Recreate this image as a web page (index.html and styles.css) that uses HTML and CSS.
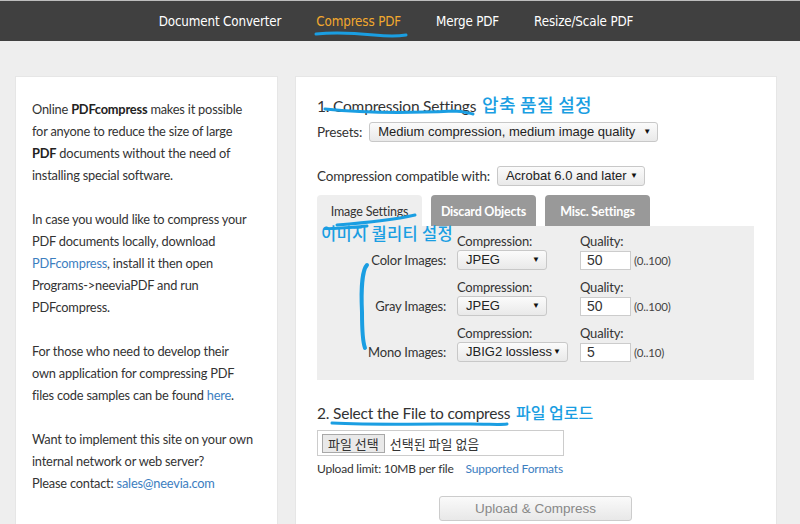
FILE: index.html
```html
<!DOCTYPE html>
<html lang="en">
<head>
    <meta charset="UTF-8">
    <title>PDFcompress - Compress PDF</title>
    <link rel="stylesheet" href="styles.css">
</head>
<body>
    <nav class="topnav">
        <a href="#">Document Converter</a>
        <a href="#" class="active">Compress PDF</a>
        <a href="#">Merge PDF</a>
        <a href="#">Resize/Scale PDF</a>
        <svg class="mark mark-nav" width="100" height="14" viewBox="0 0 100 14"><path d="M2 6 C20 4 40 5 60 7 C70 8 80 9 92 7" /></svg>
    </nav>
    <main class="wrap">
        <aside class="about">
            <p>Online <b>PDFcompress</b> makes it possible for anyone to reduce the size of large <b>PDF</b> documents without the need of installing special software.</p>
            <p>In case you would like to compress your PDF documents locally, download <a href="#">PDFcompress</a>, install it then open Programs-&gt;neeviaPDF and run PDFcompress.</p>
            <p>For those who need to develop their own application for compressing PDF files code samples can be found <a href="#">here</a>.</p>
            <p>Want to implement this site on your own internal network or web server?<br>Please contact: <a href="#">sales@neevia.com</a></p>
        </aside>
        <section class="tool">
            <h2 class="step">1. Compression Settings <span class="note note-big">압축 품질 설정</span></h2>
            <div class="row">
                <label>Presets:</label>
                <div class="select sel-preset">Medium compression, medium image quality</div>
            </div>
            <div class="row row-compat">
                <label>Compression compatible with:</label>
                <div class="select sel-compat">Acrobat 6.0 and later</div>
            </div>
            <div class="tabs">
                <div class="tab current">Image Settings</div>
                <div class="tab">Discard Objects</div>
                <div class="tab">Misc. Settings</div>
            </div>
            <div class="tab-panel">
                <span class="note note-panel">이미지 퀄리티 설정</span>
                <div class="img-row">
                    <label class="img-label">Color Images:</label>
                    <div class="field">
                        <span class="small">Compression:</span>
                        <div class="select sel-img">JPEG</div>
                    </div>
                    <div class="field">
                        <span class="small">Quality:</span>
                        <div class="quality"><span class="qbox">50</span><span class="range">(0..100)</span></div>
                    </div>
                </div>
                <div class="img-row">
                    <label class="img-label">Gray Images:</label>
                    <div class="field">
                        <span class="small">Compression:</span>
                        <div class="select sel-img">JPEG</div>
                    </div>
                    <div class="field">
                        <span class="small">Quality:</span>
                        <div class="quality"><span class="qbox">50</span><span class="range">(0..100)</span></div>
                    </div>
                </div>
                <div class="img-row">
                    <label class="img-label">Mono Images:</label>
                    <div class="field">
                        <span class="small">Compression:</span>
                        <div class="select sel-mono">JBIG2 lossless</div>
                    </div>
                    <div class="field">
                        <span class="small">Quality:</span>
                        <div class="quality"><span class="qbox">5</span><span class="range">(0..10)</span></div>
                    </div>
                </div>
            </div>
            <h2 class="step step-file">2. Select the File to compress <span class="note">파일 업로드</span></h2>
            <div class="file-box">
                <span class="file-btn">파일 선택</span>
                <span class="file-name">선택된 파일 없음</span>
            </div>
            <div class="limits">Upload limit: 10MB per file <a href="#">Supported Formats</a></div>
            <div class="submit-row"><span class="btn-upload">Upload &amp; Compress</span></div>

            <svg class="mark mark-h1" width="160" height="14" viewBox="0 0 160 14"><path d="M2 4 C40 8 90 8 130 6 C140 6 145 8 150 9" /></svg>
            <svg class="mark mark-tab" width="100" height="18" viewBox="0 0 100 18"><path d="M14 13 C40 11 70 8 92 3" /><path d="M2 17 C20 16 35 15 44 14" /></svg>
            <svg class="mark mark-brace" width="14" height="90" viewBox="0 0 14 90"><path d="M10 3 C5 8 4 30 5 50 C5 65 5 78 8 86" /></svg>
            <svg class="mark mark-file" width="190" height="10" viewBox="0 0 190 10"><path d="M2 4 C40 6 100 5 140 5 C160 5 170 6 177 5" /></svg>
        </section>
    </main>
</body>
</html>
```

FILE: styles.css
```css
* { margin: 0; padding: 0; box-sizing: border-box; }
body { background-color: #eeeeee; color: #333333; font-family: 'Lato', 'Noto Sans CJK KR', sans-serif; font-size: 14px; letter-spacing: -0.2px; height: 524px; overflow: hidden; }
a { color: #3c7ebf; text-decoration: none; }

.topnav { position: relative; height: 41px; background-color: #404040; border-top: 1px solid #bdbdbd; display: flex; justify-content: center; gap: 35px; padding-right: 8px; align-items: center; }
.topnav a { color: #ffffff; font-family: 'Liberation Sans Narrow', 'DejaVu Sans Condensed', sans-serif; font-size: 13.3px; font-weight: 400; letter-spacing: -0.15px; }
.topnav a.active { color: #f2a82e; }

.mark { position: absolute; fill: none; stroke: #1a9ee2; stroke-width: 3; stroke-linecap: round; }
.mark-nav { left: 314px; top: 27px; }

.wrap { display: flex; gap: 17px; margin: 35px 0 0 15px; align-items: flex-start; }
.about { width: 263px; height: 460px; background-color: #ffffff; padding: 21px 23px 21px 16px; border: 1px solid #e6e6e6; }
.about p { line-height: 22px; margin-bottom: 22px; font-size: 12.8px; }
.about b { color: #222222; font-weight: 700; }

.tool { position: relative; width: 482px; height: 460px; background-color: #ffffff; padding: 16px 22px 0 21px; border: 1px solid #e6e6e6; }
.step { font-size: 15.5px; font-weight: 400; color: #333333; line-height: 22px; }
.note { color: #1a9ee2; font-family: 'Noto Sans CJK KR', sans-serif; font-weight: 500; font-size: 16px; margin-left: 2px; letter-spacing: 0; }
.note-big { font-size: 18px; letter-spacing: 0.3px; }

.row { display: flex; align-items: center; gap: 7px; margin-top: 5px; }
.row label { font-size: 13.5px; }
.row-compat { margin-top: 24px; }
.select { position: relative; height: 20px; border: 1px solid #c8c8c8; border-radius: 3px; background: linear-gradient(#fbfbfb, #e9e9e9); font-family: 'Liberation Sans', Arial, sans-serif; font-size: 13px; letter-spacing: 0; color: #222222; line-height: 18px; padding-left: 8px; }
.select::after { content: '▼'; position: absolute; right: 6px; top: 0; font-size: 8px; color: #111111; }
.sel-preset { width: 289px; }
.sel-compat { width: 148px; }

.tabs { display: flex; gap: 9px; margin-top: 9px; }
.tab { width: 105px; height: 31px; border-radius: 4px 4px 0 0; background-color: #999999; color: #ffffff; font-size: 12.5px; font-weight: 700; text-align: center; line-height: 33px; }
.tab.current { background-color: #eeeeee; color: #333333; font-weight: 400; }

.tab-panel { position: relative; background-color: #eeeeee; height: 154px; padding: 7px 0 0 0; }
.note-panel { position: absolute; left: 4px; top: -5px; font-size: 16.5px; margin: 0; letter-spacing: 0.3px; }
.img-row { display: flex; align-items: flex-end; margin-bottom: 9px; }
.img-label { width: 129px; text-align: right; font-size: 13px; height: 20px; line-height: 20px; }
.field { display: flex; flex-direction: column; gap: 1px; margin-left: 11px; }
.field + .field { margin-left: 0; }
.img-row .field:nth-child(2) { width: 123px; }
.small { font-size: 13px; line-height: 16px; }
.sel-img { width: 90px; }
.sel-mono { width: 111px; }
.quality { display: flex; align-items: center; height: 20px; }
.qbox { width: 51px; height: 19px; background-color: #ffffff; border: 1px solid #cccccc; font-family: 'Liberation Sans', Arial, sans-serif; font-size: 14px; letter-spacing: 0; line-height: 17px; padding-left: 6px; }
.range { font-size: 11.5px; color: #444444; margin-left: 3px; }

.step-file { margin-top: 21px; }
.file-box { margin-top: 6px; width: 247px; height: 26px; border: 1px solid #cccccc; display: flex; align-items: center; padding-left: 4px; font-family: 'Noto Sans CJK KR', sans-serif; font-size: 13px; letter-spacing: 0; }
.file-btn { border: 1px solid #a8a8a8; background-color: #e9e9e9; padding: 0 5px; height: 19px; line-height: 17px; }
.file-name { margin-left: 5px; }
.limits { margin-top: 5px; font-size: 12px; }
.limits a { margin-left: 9px; }
.submit-row { display: flex; justify-content: center; margin-top: 20px; }
.btn-upload { width: 193px; height: 25px; border: 1px solid #cccccc; border-radius: 3px; background: linear-gradient(#fafafa, #e8e8e8); color: #888888; font-family: 'Liberation Sans', Arial, sans-serif; font-size: 13.5px; letter-spacing: 0; text-align: center; line-height: 23px; }

.mark-h1 { left: 27px; top: 28px; }
.mark-tab { left: 27px; top: 135px; }
.mark-brace { left: 61px; top: 185px; stroke-width: 4; }
.mark-file { left: 34px; top: 342px; }
```
